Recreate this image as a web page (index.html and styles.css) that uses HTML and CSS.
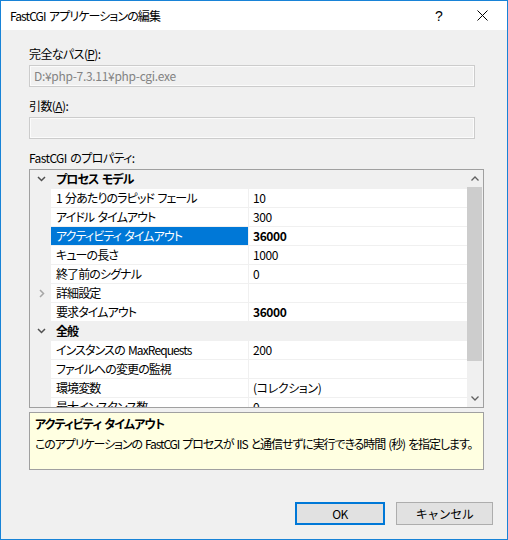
FILE: index.html
```html
<!DOCTYPE html>
<html>
<head>
  <title>FastCGI アプリケーションの編集</title>
  <meta charset="UTF-8" />
  <meta name="viewport" content="width=device-width, initial-scale=1.0"/>
  <link rel="stylesheet" href="styles.css">
</head>
<body>
  <div class="window">
    <div class="titlebar">
      <span class="title">FastCGI アプリケーションの編集</span>
      <span class="help">?</span>
      <span class="close">
        <svg width="11" height="11" viewBox="0 0 11 11"><path d="M0.5 0.5 L10.5 10.5 M10.5 0.5 L0.5 10.5" stroke="#000" stroke-width="1" fill="none"/></svg>
      </span>
    </div>

    <div class="content">
      <div class="label">完全なパス(<u>P</u>):</div>
      <div class="textbox">D:¥php-7.3.11¥php-cgi.exe</div>

      <div class="label gap">引数(<u>A</u>):</div>
      <div class="textbox"></div>

      <div class="label gap">FastCGI のプロパティ:</div>
      <div class="grid">
        <div class="rows">
          <div class="row category">
            <span class="toggle"><svg width="9" height="6" viewBox="0 0 9 6"><path d="M1 1 L4.5 4.5 L8 1" stroke="#505050" stroke-width="1.5" fill="none"/></svg></span>
            <span class="cat-name">プロセス モデル</span>
          </div>
          <div class="row"><span class="toggle"></span><span class="name">1 分あたりのラピッド フェール</span><span class="value">10</span></div>
          <div class="row"><span class="toggle"></span><span class="name">アイドル タイムアウト</span><span class="value">300</span></div>
          <div class="row"><span class="toggle"></span><span class="name selected">アクティビティ タイムアウト</span><span class="value bold">36000</span></div>
          <div class="row"><span class="toggle"></span><span class="name">キューの長さ</span><span class="value">1000</span></div>
          <div class="row"><span class="toggle"></span><span class="name">終了前のシグナル</span><span class="value">0</span></div>
          <div class="row">
            <span class="toggle"><svg width="6" height="9" viewBox="0 0 6 9"><path d="M1 1 L4.5 4.5 L1 8" stroke="#a6a6a6" stroke-width="1.5" fill="none"/></svg></span>
            <span class="name">詳細設定</span><span class="value"></span>
          </div>
          <div class="row"><span class="toggle"></span><span class="name">要求タイムアウト</span><span class="value bold">36000</span></div>
          <div class="row category">
            <span class="toggle"><svg width="9" height="6" viewBox="0 0 9 6"><path d="M1 1 L4.5 4.5 L8 1" stroke="#505050" stroke-width="1.5" fill="none"/></svg></span>
            <span class="cat-name">全般</span>
          </div>
          <div class="row"><span class="toggle"></span><span class="name">インスタンスの MaxRequests</span><span class="value">200</span></div>
          <div class="row"><span class="toggle"></span><span class="name">ファイルへの変更の監視</span><span class="value"></span></div>
          <div class="row"><span class="toggle"></span><span class="name">環境変数</span><span class="value">(コレクション)</span></div>
          <div class="row"><span class="toggle"></span><span class="name">最大インスタンス数</span><span class="value">0</span></div>
        </div>
        <div class="scrollbar">
          <div class="arrow"><svg width="8" height="5" viewBox="0 0 8 5"><path d="M0.5 4.5 L4 1 L7.5 4.5" stroke="#606060" stroke-width="1.3" fill="none"/></svg></div>
          <div class="track"><div class="thumb"></div></div>
          <div class="arrow"><svg width="8" height="5" viewBox="0 0 8 5"><path d="M0.5 0.5 L4 4 L7.5 0.5" stroke="#606060" stroke-width="1.3" fill="none"/></svg></div>
        </div>
      </div>

      <div class="description">
        <div class="desc-title">アクティビティ タイムアウト</div>
        <div class="desc-text">このアプリケーションの FastCGI プロセスが IIS と通信せずに実行できる時間 (秒) を指定します。</div>
      </div>

      <div class="buttons">
        <button class="btn default">OK</button>
        <button class="btn cancel">キャンセル</button>
      </div>
    </div>
  </div>
</body>
</html>
```

FILE: styles.css
```css
body { margin: 0; font-family: "Noto Sans CJK JP", sans-serif; font-size: 12px; color: #000; font-feature-settings: "palt" 1; letter-spacing: -0.9px; word-spacing: 1.5px; }
.window { width: 508px; height: 540px; box-sizing: border-box; border: 1px solid #1883d7; background: #f0f0f0; }

.titlebar { height: 29px; background: #fff; display: flex; align-items: center; }
.title { margin-left: 9px; flex: 1; line-height: 16px; }
.help { width: 12px; margin-right: 30px; font-family: "Liberation Sans", sans-serif; font-size: 14px; letter-spacing: 0; }
.close { width: 11px; height: 11px; margin-right: 19px; display: flex; }

.content { padding: 16px 14px 0 28px; }
.label { height: 16px; line-height: 16px; margin-bottom: 3px; letter-spacing: -0.6px; }
.label.gap { margin-top: 11px; }
.textbox { width: 446px; height: 22px; box-sizing: border-box; border: 1px solid #cccccc; box-shadow: inset 0 0 0 1px #fbfbfb; color: #838383; line-height: 20px; padding-left: 4px; letter-spacing: -0.3px; }

.grid { width: 455px; height: 239px; box-sizing: border-box; border: 1px solid #a0a0a0; display: flex; background: #f0f0f0; }
.rows { width: 437px; overflow: hidden; }
.row { display: flex; height: 19px; box-sizing: border-box; border-bottom: 1px solid #f0f0f0; line-height: 18px; }
.toggle { width: 21px; flex: none; display: flex; align-items: center; justify-content: center; padding-left: 2px; box-sizing: border-box; }
.name { width: 198px; flex: none; box-sizing: border-box; padding-left: 5px; background: #fff; border-right: 1px solid #f0f0f0; white-space: nowrap; }
.name.selected { background: #0078d7; color: #fff; }
.value { flex: 1; padding-left: 4px; background: #fff; white-space: nowrap; letter-spacing: -0.4px; }
.bold { font-weight: bold; }
.category { background: #f0f0f0; }
.cat-name { padding-left: 5px; font-weight: bold; }

.scrollbar { width: 16px; display: flex; flex-direction: column; }
.arrow { height: 17px; display: flex; align-items: center; justify-content: center; }
.track { flex: 1; }
.thumb { height: 174px; background: #cdcdcd; margin: 0 1px 0 0; }

.description { width: 455px; height: 58px; box-sizing: border-box; margin-top: 4px; border: 1px solid #a0a0a0; background: #ffffe1; padding: 2px 5px; }
.desc-title { font-weight: bold; line-height: 18px; }
.desc-text { line-height: 18px; margin-top: 2px; white-space: nowrap; letter-spacing: -1.1px; }

.buttons { display: flex; justify-content: flex-end; gap: 11px; margin-top: 32px; }
.btn { height: 23px; font-family: inherit; font-size: 12px; background: #e1e1e1; padding: 0; color: #000; letter-spacing: -0.5px; }
.btn.default { width: 90px; border: 2px solid #0078d7; }
.btn.cancel { width: 97px; border: 1px solid #adadad; }
```
